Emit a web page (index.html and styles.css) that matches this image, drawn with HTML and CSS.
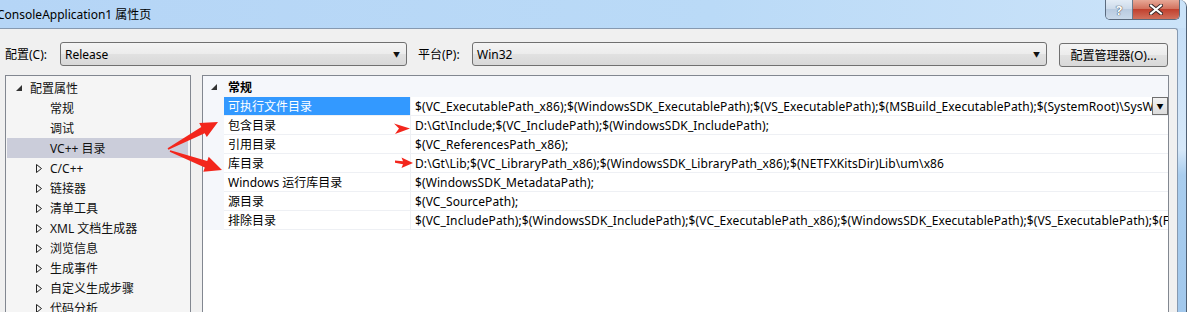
FILE: index.html
```html
<!DOCTYPE html>
<html lang="zh-CN">
<head>
  <meta charset="UTF-8">
  <title>ConsoleApplication1 属性页</title>
  <link rel="stylesheet" href="styles.css">
</head>
<body>
  <div class="window">
    <div class="titlebar">
      <span class="title">ConsoleApplication1 属性页</span>
      <div class="caption-btns">
        <span class="btn-help">?</span>
        <span class="btn-close">
          <svg width="14" height="11" viewBox="0 0 14 11">
            <path d="M2 1.5 L12 9.5 M12 1.5 L2 9.5" stroke="#3b2a2a" stroke-width="4" stroke-linecap="square"/>
            <path d="M2 1.5 L12 9.5 M12 1.5 L2 9.5" stroke="#fff" stroke-width="2" stroke-linecap="square"/>
          </svg>
        </span>
      </div>
    </div>

    <div class="client">
      <div class="config-row">
        <label class="cfg-label">配置(C):</label>
        <div class="combo combo-release"><span>Release</span><span class="drop">&#9660;</span></div>
        <label class="plat-label">平台(P):</label>
        <div class="combo combo-win"><span>Win32</span><span class="drop">&#9660;</span></div>
        <button class="btn-mgr">配置管理器(O)...</button>
      </div>

      <div class="panes">
        <div class="tree">
          <div class="node l0"><span class="exp"><svg width="6" height="6"><polygon points="6,0 6,6 0,6" fill="#333"/></svg></span>配置属性</div>
          <div class="node l1"><span class="exp"></span>常规</div>
          <div class="node l1"><span class="exp"></span>调试</div>
          <div class="node l1 sel"><span class="exp"></span>VC++ 目录</div>
          <div class="node l1"><span class="exp"><svg width="6" height="9"><polygon points="0.5,0.5 5.5,4.5 0.5,8.5" fill="none" stroke="#222"/></svg></span>C/C++</div>
          <div class="node l1"><span class="exp"><svg width="6" height="9"><polygon points="0.5,0.5 5.5,4.5 0.5,8.5" fill="none" stroke="#222"/></svg></span>链接器</div>
          <div class="node l1"><span class="exp"><svg width="6" height="9"><polygon points="0.5,0.5 5.5,4.5 0.5,8.5" fill="none" stroke="#222"/></svg></span>清单工具</div>
          <div class="node l1"><span class="exp"><svg width="6" height="9"><polygon points="0.5,0.5 5.5,4.5 0.5,8.5" fill="none" stroke="#222"/></svg></span>XML 文档生成器</div>
          <div class="node l1"><span class="exp"><svg width="6" height="9"><polygon points="0.5,0.5 5.5,4.5 0.5,8.5" fill="none" stroke="#222"/></svg></span>浏览信息</div>
          <div class="node l1"><span class="exp"><svg width="6" height="9"><polygon points="0.5,0.5 5.5,4.5 0.5,8.5" fill="none" stroke="#222"/></svg></span>生成事件</div>
          <div class="node l1"><span class="exp"><svg width="6" height="9"><polygon points="0.5,0.5 5.5,4.5 0.5,8.5" fill="none" stroke="#222"/></svg></span>自定义生成步骤</div>
          <div class="node l1"><span class="exp"><svg width="6" height="9"><polygon points="0.5,0.5 5.5,4.5 0.5,8.5" fill="none" stroke="#222"/></svg></span>代码分析</div>
        </div>

        <div class="grid">
          <div class="cat">
            <div class="mcol"><svg width="6" height="6"><polygon points="6,0 6,6 0,6" fill="#333"/></svg></div>
            <div class="cat-name">常规</div>
          </div>
          <div class="row">
            <div class="mcol"></div>
            <div class="name selected">可执行文件目录</div>
            <div class="value"><span class="txt">$(VC_ExecutablePath_x86);$(WindowsSDK_ExecutablePath);$(VS_ExecutablePath);$(MSBuild_ExecutablePath);$(SystemRoot)\SysWow64;$(FxCopDir);$(PATH);</span><span class="cell-drop">&#9660;</span></div>
          </div>
          <div class="row">
            <div class="mcol"></div>
            <div class="name">包含目录</div>
            <div class="value"><span class="txt">D:\Gt\Include;$(VC_IncludePath);$(WindowsSDK_IncludePath);</span></div>
          </div>
          <div class="row">
            <div class="mcol"></div>
            <div class="name">引用目录</div>
            <div class="value"><span class="txt">$(VC_ReferencesPath_x86);</span></div>
          </div>
          <div class="row">
            <div class="mcol"></div>
            <div class="name">库目录</div>
            <div class="value"><span class="txt">D:\Gt\Lib;$(VC_LibraryPath_x86);$(WindowsSDK_LibraryPath_x86);$(NETFXKitsDir)Lib\um\x86</span></div>
          </div>
          <div class="row">
            <div class="mcol"></div>
            <div class="name">Windows 运行库目录</div>
            <div class="value"><span class="txt">$(WindowsSDK_MetadataPath);</span></div>
          </div>
          <div class="row">
            <div class="mcol"></div>
            <div class="name">源目录</div>
            <div class="value"><span class="txt">$(VC_SourcePath);</span></div>
          </div>
          <div class="row">
            <div class="mcol"></div>
            <div class="name">排除目录</div>
            <div class="value"><span class="txt">$(VC_IncludePath);$(WindowsSDK_IncludePath);$(VC_ExecutablePath_x86);$(WindowsSDK_ExecutablePath);$(VS_ExecutablePath);$(FxCopDir);$(PATH);</span></div>
          </div>
        </div>
      </div>
    </div>

    <!-- red annotation arrows drawn over the screenshot -->
    <svg class="marks" width="1191" height="312" viewBox="0 0 1191 312">
      <polygon points="167.6,148.3 201.3,127 199.2,123.1 218,122 206.8,137.1 204.7,133.2 168.4,149.7" fill="#f3261c"/>
      <polygon points="170.3,150.25 207.2,160.9 208.7,156.7 222,170 203.3,171.7 204.8,167.5 169.7,151.75" fill="#f3261c"/>
      <polygon points="394,123.5 410,128.5 395,134 399,128.5" fill="#f3261c"/>
      <polygon points="395,160.5 403,161.2 401.5,157.5 413,163 401.5,168 403,164.3 395,162.8" fill="#f3261c"/>
    </svg>
  </div>
</body>
</html>
```

FILE: styles.css
```css
* {
  box-sizing: border-box;
}
body {
  margin: 0;
  width: 1191px;
  height: 312px;
  overflow: hidden;
  background: #fff;
  font-family: "Noto Sans", "Noto Sans CJK SC", sans-serif;
  font-size: 12px;
  color: #000;
}
.window {
  position: relative;
  width: 1187px;
  height: 312px;
  display: flex;
  flex-direction: column;
  background: linear-gradient(#c3ddf7 0, #d6e8f9 150px, #a9cdee 175px, #a2c8ec 100%);
  border-right: 1px solid #4f6074;
  border-top-right-radius: 7px;
}
.titlebar {
  height: 28px;
  flex: none;
  display: flex;
  align-items: flex-start;
  background: linear-gradient(to right, #b5d5f6, #badaf7 60%, #cbe3f9);
  border-top-right-radius: 7px;
}
.title {
  margin-left: -3px;
  line-height: 30px;
  color: #000;
}
.caption-btns {
  margin-left: auto;
  margin-right: 6px;
  display: flex;
  height: 20px;
  border: 1px solid #5b6b7e;
  border-top: none;
  border-radius: 0 0 5px 5px;
  overflow: hidden;
}
.btn-help {
  width: 27px;
  display: flex;
  align-items: center;
  justify-content: center;
  background: linear-gradient(#e3ecf6, #cbd9e9 50%, #b9cbe0 50%, #c9d9ea);
  border-right: 1px solid #6a7a8c;
  font-size: 13px;
  font-weight: bold;
  color: #fff;
  text-shadow: 0 0 1px #2f3b48, 0 0 1px #2f3b48;
}
.btn-close {
  width: 46px;
  display: flex;
  align-items: center;
  justify-content: center;
  background: linear-gradient(#e7a897, #d3735f 45%, #c1412f 50%, #d0705c);
}
.client {
  flex: 1;
  display: flex;
  flex-direction: column;
  margin-right: 8px;
  background: #f0f0f0;
  border-top: 1px solid #8699b0;
  border-right: 1px solid #8699b0;
  border-top-right-radius: 3px;
  padding: 13px 0 0 5px;
}
.config-row {
  display: flex;
  align-items: center;
  height: 24px;
}
.cfg-label {
  width: 55px;
}
.plat-label {
  margin-left: 11px;
  width: 54px;
}
.combo {
  height: 24px;
  display: flex;
  align-items: center;
  justify-content: space-between;
  padding: 0 6px 0 4px;
  border: 1px solid #707070;
  border-radius: 3px;
  background: linear-gradient(#f4f4f4, #ececec 50%, #e1e1e1 52%, #d8d8d8);
}
.combo-release {
  width: 347px;
}
.combo-win {
  width: 575px;
}
.drop {
  font-size: 7px;
  color: #111;
}
.btn-mgr {
  margin-left: 12px;
  margin-top: 2px;
  width: 109px;
  height: 24px;
  padding: 0;
  font-family: inherit;
  font-size: 12px;
  color: #000;
  border: 1px solid #707070;
  border-radius: 3px;
  background: linear-gradient(#f4f4f4, #ececec 50%, #e1e1e1 52%, #d8d8d8);
}
.panes {
  flex: 1;
  display: flex;
  gap: 11px;
  margin-top: 9px;
}
.tree {
  width: 186px;
  border: 1px solid #828790;
  border-bottom: none;
  background: #f5f5f5;
  padding: 2px 2px 0 1px;
}
.node {
  height: 20px;
  display: flex;
  align-items: center;
  white-space: nowrap;
  color: #111;
}
.l0 {
  padding-left: 9px;
}
.l1 {
  padding-left: 29px;
}
.exp {
  width: 14px;
  flex: none;
  display: flex;
  align-items: center;
}
.sel {
  background: #cbcdda;
}
.grid {
  width: 967px;
  border: 1px solid #828790;
  border-bottom: none;
  background: #fff;
}
.cat {
  display: flex;
  height: 21px;
  align-items: center;
  background: #f5f7fb;
}
.mcol {
  width: 21px;
  flex: none;
  align-self: stretch;
  display: flex;
  align-items: center;
  justify-content: center;
  background: #f5f7fb;
}
.cat-name {
  padding-left: 4px;
  font-weight: bold;
}
.row {
  display: flex;
  height: 19px;
}
.name {
  width: 187px;
  flex: none;
  padding-left: 4px;
  line-height: 19px;
  white-space: nowrap;
  border-bottom: 1px solid #eef0f4;
  border-right: 1px solid #eef0f4;
}
.name.selected {
  background: #3399ff;
  color: #fff;
}
.value {
  flex: 1;
  min-width: 0;
  display: flex;
  padding-left: 4px;
  line-height: 19px;
  letter-spacing: 0.1px;
  border-bottom: 1px solid #eef0f4;
}
.txt {
  flex: 1;
  overflow: hidden;
  white-space: nowrap;
}
.cell-drop {
  width: 16px;
  flex: none;
  display: flex;
  align-items: center;
  justify-content: center;
  font-size: 7px;
  border: 1px solid #6f6f6f;
  background: linear-gradient(#f2f2f2, #dcdcdc);
}
.marks {
  position: absolute;
  left: 0;
  top: 0;
  pointer-events: none;
}
```
